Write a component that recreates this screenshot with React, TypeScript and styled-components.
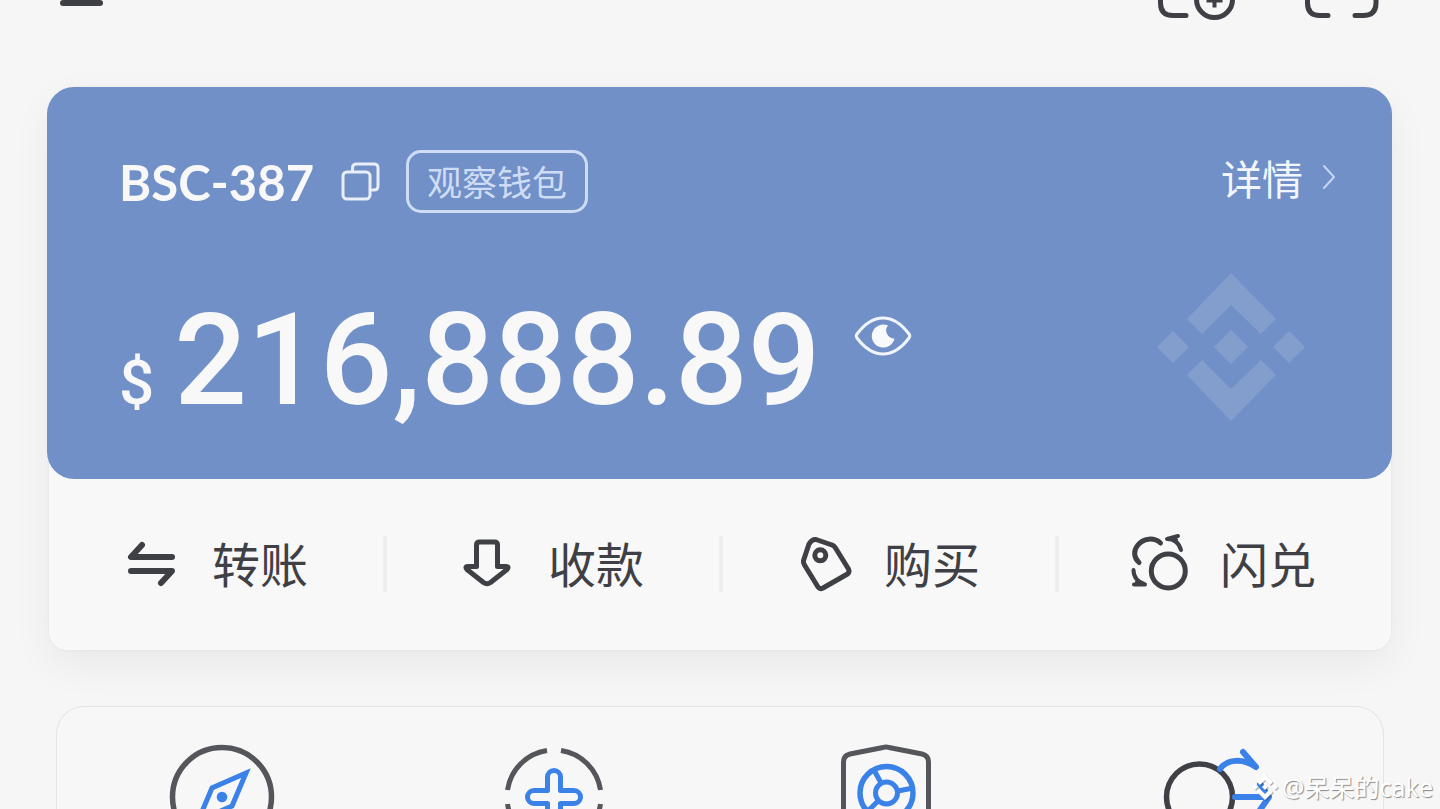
import React from "react";
import styled, { createGlobalStyle } from "styled-components";

const ink = "#3f4045";
const softInk = "#54565b";
const accent = "#3b82e8";

const GlobalStyle = createGlobalStyle`
  *, *::before, *::after { box-sizing: border-box; }
  body {
    margin: 0;
    background: #f6f6f6;
    color: ${ink};
    font-family: "Noto Sans", "Noto Sans CJK SC", sans-serif;
  }
  button {
    margin: 0;
    padding: 0;
    border: 0;
    background: none;
    color: inherit;
    font: inherit;
    cursor: pointer;
  }
  svg { display: block; flex: none; overflow: visible; }
`;

const Page = styled.div`
  position: relative;
  display: flex;
  flex-direction: column;
  height: 100vh;
  overflow: hidden;
`;

const TopBar = styled.header`
  display: flex;
  flex: none;
  justify-content: space-between;
  height: 87px;
  padding: 0 61px 0 60px;
`;

const TopActions = styled.div`
  display: flex;
  gap: 68px;
`;

const IconButton = styled.button`
  display: flex;
  align-items: flex-start;
`;

const Wallet = styled.section`
  flex: none;
  margin: 0 49px;
  border-radius: 28px 28px 18px 18px;
  background: #f8f8f8;
  box-shadow: 0 14px 40px rgba(0, 0, 0, 0.06), 0 0 3px rgba(0, 0, 0, 0.06);
`;

const BalanceCard = styled.div`
  margin: 0 -1px 0 -2px;
  padding: 63px 56px 58px 72px;
  border-radius: 27px;
  background: #7190c8;
  color: #f8f8f9;
`;

const CardHead = styled.div`
  display: flex;
  align-items: center;
  height: 63px;
`;

const WalletName = styled.h1`
  margin: 0 27px 0 0;
  font: 700 49px/60px Lato, sans-serif;
`;

const Badge = styled.span`
  margin-left: 26px;
  padding: 0 18px 2px;
  border: 3px solid #cfdcf5;
  border-radius: 15px;
  color: #cfdcf5;
  font-family: "Noto Sans CJK SC", sans-serif;
  font-size: 35px;
  line-height: 55px;
`;

const Details = styled.a`
  display: flex;
  align-items: center;
  gap: 19px;
  height: 54px;
  margin: 0 0 auto auto;
  color: #f3f6fc;
  font-family: "Noto Sans CJK SC", sans-serif;
  font-size: 41px;
  line-height: 54px;
  text-decoration: none;
`;

const BalanceRow = styled.div`
  display: flex;
  align-items: flex-start;
  margin-top: 60px;
`;

const Balance = styled.p`
  display: flex;
  align-items: baseline;
  gap: 20px;
  margin: 0 34px 0 0;
  padding-top: 26px;
  font: 500 128px/122px Roboto, sans-serif;
`;

const Currency = styled.span`
  font-size: 62px;
  line-height: 62px;
`;

const EyeButton = styled(IconButton)`
  margin-top: 42px;
`;

const ChainMark = styled.svg`
  margin: 0 31px 0 auto;
`;

const Actions = styled.nav`
  display: flex;
  align-items: center;
  height: 171px;
  padding: 0 0 2px 2px;
`;

const Action = styled.button`
  display: flex;
  flex: 1;
  align-items: center;
  justify-content: center;
  gap: 30px;
  height: 60px;
  padding-right: 4px;
`;

const ActionLabel = styled.span`
  padding-bottom: 4px;
  font-family: "Noto Sans CJK SC", sans-serif;
  font-size: 48px;
  line-height: 60px;
`;

const Divider = styled.span`
  width: 4px;
  height: 56px;
  background: #eeeeee;
`;

const Services = styled.section`
  display: grid;
  flex: 1;
  grid-template-columns: repeat(4, 1fr);
  align-items: start;
  min-height: 0;
  margin: 56px 56px 0;
  padding-top: 36px;
  border: 1px solid #e4e4e4;
  border-bottom: 0;
  border-radius: 28px 28px 0 0;
  background: #f7f7f7;
`;

const Service = styled.button`
  display: flex;
  justify-content: center;
`;

const Watermark = styled.div`
  position: absolute;
  right: 7px;
  bottom: 4px;
  display: flex;
  align-items: center;
  gap: 4px;
  color: #fff;
  font-size: 25px;
  line-height: 36px;
  text-shadow: 1px 1px 1px rgba(0, 0, 0, 0.45);

  svg { filter: drop-shadow(1px 1px 0 rgba(0, 0, 0, 0.3)); }
`;

const line = (stroke: string, strokeWidth: number) => ({
  fill: "none",
  stroke,
  strokeWidth,
  strokeLinecap: "round" as const,
  strokeLinejoin: "round" as const,
});

const MenuIcon = () => (
  <svg width="43" height="7" viewBox="0 0 43 7">
    <path d="M3 3H40" {...line(ink, 6)} />
  </svg>
);

const AddWalletIcon = () => (
  <svg width="79" height="21" viewBox="0 0 79 21">
    <path d="M2.500-10V3Q2.500 15.500 15 15.500H28" {...line(ink, 5)} />
    <circle cx="56.500" cy="-.5" r="18" {...line(ink, 5)} />
    <path d="M48.500 .5H64.500M56.500-7V7.500" stroke={ink} strokeWidth="4" />
  </svg>
);

const ScanIcon = () => (
  <svg width="74" height="21" viewBox="0 0 74 21">
    <path d="M2.500-6V3Q2.500 15.500 15 15.500H23M50 15.500H58Q71 15.500 71 3V-6" {...line(ink, 5)} />
  </svg>
);

const CopyIcon = () => (
  <svg width="39" height="39" viewBox="0 0 39 39">
    <rect x="2" y="10" width="27" height="27" rx="4" {...line("#e8eefa", 3)} />
    <path d="M11.500 9V6Q11.500 2 15.500 2H33Q37 2 37 6V24Q37 28 33 28H31" {...line("#e8eefa", 3)} />
  </svg>
);

const ChevronIcon = () => (
  <svg width="14" height="24" viewBox="0 0 14 24">
    <path d="M2 1L12 12L2 23" {...line("#c6d4f0", 2)} />
  </svg>
);

const EyeIcon = () => (
  <svg width="58" height="42" viewBox="0 0 58 42">
    <path
      d="M3 19C9 11 18 3 29 3S49 11 55 19Q56.500 21 55 23C49 31 40 39 29 39S9 31 3 23Q1.500 21 3 19Z"
      {...line("#f0f4fc", 3)}
    />
    <path d="M34 10.500A11.500 11.500 0 1 0 40.500 23.500A8 8 0 0 1 34 10.500Z" fill="#f8f9fb" />
  </svg>
);

const ChainIcon = () => (
  <ChainMark width="148" height="148" viewBox="0 0 148 148" fill="#839ecd" aria-hidden="true">
    <path d="M74 0L119 46L104 61L74 32L45 61L30 46Z" />
    <path d="M74 148L119 102L104 87L74 116L45 87L30 102Z" />
    <path d="M74 57L91 74L74 91L57 74Z" />
    <path d="M16 58L32 74L16 90L0 74Z" />
    <path d="M132 58L148 74L132 90L116 74Z" />
  </ChainMark>
);

const TransferIcon = () => (
  <svg width="60" height="60" viewBox="0 0 60 60">
    <path d="M20 11L9 23H50M9 37H50L39 49" {...line(ink, 6)} />
  </svg>
);

const ReceiveIcon = () => (
  <svg width="60" height="60" viewBox="0 0 60 60">
    <path
      d="M18.500 11Q18.500 8 21.500 8H36.500Q39.500 8 39.500 11V32.500H48Q51.500 32.500 49 35.500L32.500 48.500Q29 51 25.500 48.500L9 35.500Q6.500 32.500 10 32.500H18.500Z"
      {...line(ink, 5)}
    />
  </svg>
);

const BuyIcon = () => (
  <svg width="60" height="60" viewBox="0 0 60 60">
    <path
      d="M15 10Q18 5 22 5.500L38 11Q40 11.500 41.500 14L54.500 35Q56 38 53.500 40L29 54Q26 55.500 24 53L10.500 31Q9 29 9.500 26.500Z"
      {...line(ink, 5)}
    />
    <circle cx="26.300" cy="21.300" r="5.500" {...line(ink, 5)} />
  </svg>
);

const SwapIcon = () => (
  <svg width="60" height="60" viewBox="0 0 60 60">
    <circle cx="38.300" cy="37" r="17" {...line(ink, 5)} />
    <path d="M30.500 9C24 3 13 4 7.500 11.500C3 17 4 24 9 28.500" {...line(ink, 5)} />
    <path d="M48 2L37 5C44 5 49 9 51 16M42 4L46 6" {...line(ink, 4)} />
    <path d="M3.500 36C3.500 43 8 48 15 50.500H4M7 48L11 50" {...line(ink, 4)} />
  </svg>
);

const CompassIcon = () => (
  <svg width="108" height="108" viewBox="0 0 108 108">
    <circle cx="53" cy="54" r="49.500" fill="none" stroke={softInk} strokeWidth="5.500" />
    <path d="M77 30L43 45L29 78L63 63Z" fill="none" stroke={accent} strokeWidth="5" />
    <circle cx="53" cy="54" r="5.300" fill={accent} />
  </svg>
);

const PlusIcon = () => (
  <svg width="108" height="108" viewBox="0 0 108 108">
    <path
      d="M61 7.500A47 47 0 0 1 100.500 47M100.500 61A47 47 0 0 1 61 100.500M47 100.500A47 47 0 0 1 7.500 61M7.500 47A47 47 0 0 1 47 7.500"
      fill="none"
      stroke={softInk}
      strokeWidth="5"
    />
    <path
      d="M47.500 34A6.500 6.500 0 0 1 60.500 34V47.500H74A6.500 6.500 0 0 1 74 60.500H60.500V74A6.500 6.500 0 0 1 47.500 74V60.500H34A6.500 6.500 0 0 1 34 47.500H47.500Z"
      {...line(accent, 5)}
    />
  </svg>
);

const ShieldIcon = () => (
  <svg width="108" height="108" viewBox="0 0 108 108">
    <path
      d="M51 4.500Q54 3.500 57 4.500L90 11Q96.500 12.500 96.500 19V70Q96 90 54 104Q12 90 11.500 70V19Q11.500 12.500 18 11Z"
      {...line(softInk, 5)}
    />
    <circle cx="54.500" cy="50" r="26.500" fill="none" stroke={accent} strokeWidth="5.500" />
    <circle cx="54.500" cy="50" r="11" fill="none" stroke={accent} strokeWidth="5" />
    <path d="M49 40L42 27M66 48L81 45M46 58L36 68" stroke={accent} strokeWidth="5" />
  </svg>
);

const SpreadIcon = () => (
  <svg width="108" height="108" viewBox="0 0 108 108">
    <circle cx="36.500" cy="54" r="33" fill="none" stroke={ink} strokeWidth="5.500" />
    <path d="M57 26C64 16 80 15 93 24L80 9" {...line(accent, 6)} />
    <path d="M72 54H106M97 41L106 54L97 67" {...line(accent, 6)} />
  </svg>
);

const actions = [
  { label: "转账", Icon: TransferIcon },
  { label: "收款", Icon: ReceiveIcon },
  { label: "购买", Icon: BuyIcon },
  { label: "闪兑", Icon: SwapIcon },
];

const services = [
  { label: "发现", Icon: CompassIcon },
  { label: "添加", Icon: PlusIcon },
  { label: "安全", Icon: ShieldIcon },
  { label: "跨链", Icon: SpreadIcon },
];

export default function App() {
  return (
    <Page>
      <GlobalStyle />
      <TopBar>
        <IconButton aria-label="菜单"><MenuIcon /></IconButton>
        <TopActions>
          <IconButton aria-label="添加钱包"><AddWalletIcon /></IconButton>
          <IconButton aria-label="扫一扫"><ScanIcon /></IconButton>
        </TopActions>
      </TopBar>

      <Wallet>
        <BalanceCard>
          <CardHead>
            <WalletName>BSC-387</WalletName>
            <IconButton aria-label="复制地址"><CopyIcon /></IconButton>
            <Badge>观察钱包</Badge>
            <Details href="#details">
              详情
              <ChevronIcon />
            </Details>
          </CardHead>
          <BalanceRow>
            <Balance>
              <Currency>$</Currency>
              216,888.89
            </Balance>
            <EyeButton aria-label="隐藏余额"><EyeIcon /></EyeButton>
            <ChainIcon />
          </BalanceRow>
        </BalanceCard>
        <Actions>
          {actions.map(({ label, Icon }, i) => (
            <React.Fragment key={label}>
              {i > 0 && <Divider />}
              <Action>
                <Icon />
                <ActionLabel>{label}</ActionLabel>
              </Action>
            </React.Fragment>
          ))}
        </Actions>
      </Wallet>

      <Services>
        {services.map(({ label, Icon }) => (
          <Service key={label} aria-label={label}>
            <Icon />
          </Service>
        ))}
      </Services>

      <Watermark>
        <svg width="26" height="26" viewBox="0 0 26 26" fill="#fff" aria-hidden="true">
          <path d="M13 0L21 8L18 11L13 6L8 11L5 8Z" />
          <path d="M13 26L21 18L18 15L13 20L8 15L5 18Z" />
          <path d="M13 10L16 13L13 16L10 13Z" />
          <path d="M3 10L6 13L3 16L0 13ZM23 10L26 13L23 16L20 13Z" />
        </svg>
        <span>@呆呆的cake</span>
      </Watermark>
    </Page>
  );
}
